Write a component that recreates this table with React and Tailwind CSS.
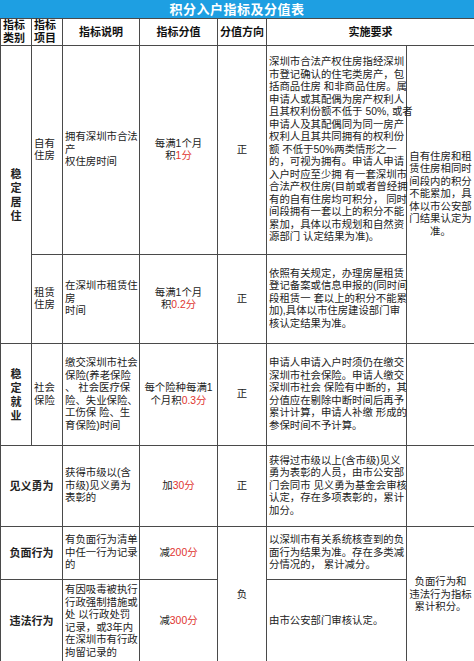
import React from 'react'

// Lines are broken by hand so that they wrap where the original table does
const L = ({ lines }) =>
    lines.map((t, i) => (
        <React.Fragment key={i}>
            {i > 0 && <br />}
            {t}
        </React.Fragment>
    ))

const Red = ({ children }) => <span className="text-[#e0352f]">{children}</span>

const td = 'border border-[#4a4a4a] align-middle px-[2px] whitespace-nowrap'
const th = 'border border-[#4a4a4a] align-middle font-bold text-[11px] leading-[13px] text-[#111]'

export default function App() {
    return (
        <div
            className="w-[474px] bg-white text-[#222] overflow-hidden h-[661px]"
            style={{ fontFamily: '"Liberation Sans", "Noto Sans CJK SC", sans-serif' }}
        >
            {/* title bar */}
            <div className="h-[18px] bg-[#1e9fe2] flex items-center justify-center text-white font-bold text-[13px] leading-[15px] tracking-[0.5px]">
                积分入户指标及分值表
            </div>

            <table className="w-[474px] table-fixed border-collapse text-[10.4px] leading-[12.5px]">
                <colgroup>
                    <col className="w-[31px]" />
                    <col className="w-[31px]" />
                    <col className="w-[77px]" />
                    <col className="w-[78px]" />
                    <col className="w-[49px]" />
                    <col className="w-[140px]" />
                    <col className="w-[68px]" />
                </colgroup>
                <tbody>
                    <tr className="h-[27px]">
                        <th className={`${th} text-left pl-[2px]`}>指标<br />类别</th>
                        <th className={`${th} text-left pl-[2px]`}>指标<br />项目</th>
                        <th className={th}>指标说明</th>
                        <th className={th}>指标分值</th>
                        <th className={th}>分值方向</th>
                        <th colSpan={2} className={th}>实施要求</th>
                    </tr>

                    {/* 稳定居住 */}
                    <tr className="h-[209px]">
                        <td rowSpan={2} className={`${td} text-center font-bold text-[11px] leading-[14px]`}>
                            <L lines={['稳', '定', '居', '住']} />
                        </td>
                        <td className={td}>
                            <L lines={['自有', '住房']} />
                        </td>
                        <td className={td}>
                            <L lines={['拥有深圳市合法', '产', '权住房时间']} />
                        </td>
                        <td className={`${td} text-center`}>
                            每满1个月<br />积<Red>1分</Red>
                        </td>
                        <td className={`${td} text-center`}>正</td>
                        <td className={td}>
                            <L
                                lines={[
                                    '深圳市合法产权住房指经深圳',
                                    '市登记确认的住宅类房产，包',
                                    '括商品住房 和非商品住房。属',
                                    '申请人或其配偶为房产权利人',
                                    '且其权利份额不低于 50%, 或者',
                                    '申请人及其配偶同为同一房产',
                                    '权利人且其共同拥有的权利份',
                                    '额 不低于50%两类情形之一',
                                    '的，可视为拥有。申请人申请',
                                    '入户时应至少拥 有一套深圳市',
                                    '合法产权住房(目前或者曾经拥',
                                    '有的自有住房均可积分， 同时',
                                    '间段拥有一套以上的积分不能',
                                    '累加，具体以市规划和自然资',
                                    '源部门 认定结果为准)。',
                                ]}
                            />
                        </td>
                        <td rowSpan={2} className={`${td} text-center`}>
                            <L
                                lines={[
                                    '自有住房和租',
                                    '赁住房相同时',
                                    '间段内的积分',
                                    '不能累加，具',
                                    '体以市公安部',
                                    '门结果认定为',
                                    '准。',
                                ]}
                            />
                        </td>
                    </tr>
                    <tr className="h-[89px]">
                        <td className={td}>
                            <L lines={['租赁', '住房']} />
                        </td>
                        <td className={td}>
                            <L lines={['在深圳市租赁住', '房', '时间']} />
                        </td>
                        <td className={`${td} text-center`}>
                            每满1个月<br />积<Red>0.2分</Red>
                        </td>
                        <td className={`${td} text-center`}>正</td>
                        <td className={td}>
                            <L
                                lines={[
                                    '依照有关规定，办理房屋租赁',
                                    '登记备案或信息申报的(同时间',
                                    '段租赁一 套以上的积分不能累',
                                    '加),具体以市住房建设部门审',
                                    '核认定结果为准。',
                                ]}
                            />
                        </td>
                    </tr>

                    {/* 稳定就业 */}
                    <tr className="h-[102px]">
                        <td className={`${td} text-center font-bold text-[11px] leading-[14px]`}>
                            <L lines={['稳', '定', '就', '业']} />
                        </td>
                        <td className={td}>
                            <L lines={['社会', '保险']} />
                        </td>
                        <td className={td}>
                            <L
                                lines={[
                                    '缴交深圳市社会',
                                    '保险(养老保险',
                                    '、 社会医疗保',
                                    '险、失业保险、',
                                    '工伤保 险、生',
                                    '育保险)时间',
                                ]}
                            />
                        </td>
                        <td className={`${td} text-center`}>
                            每个险种每满1<br />个月积<Red>0.3分</Red>
                        </td>
                        <td className={`${td} text-center`}>正</td>
                        <td className={td}>
                            <L
                                lines={[
                                    '申请人申请入户时须仍在缴交',
                                    '深圳市社会保险。申请人缴交',
                                    '深圳市社会 保险有中断的，其',
                                    '分值应在剔除中断时间后再予',
                                    '累计计算，申请人补缴 形成的',
                                    '参保时间不予计算。',
                                ]}
                            />
                        </td>
                        <td className={td}></td>
                    </tr>

                    {/* 见义勇为 */}
                    <tr className="h-[81px]">
                        <td colSpan={2} className={`${td} text-center font-bold text-[11px]`}>见义勇为</td>
                        <td className={td}>
                            <L lines={['获得市级以(含', '市级)见义勇为', '表彰的']} />
                        </td>
                        <td className={`${td} text-center`}>
                            加<Red>30分</Red>
                        </td>
                        <td className={`${td} text-center`}>正</td>
                        <td className={td}>
                            <L
                                lines={[
                                    '获得过市级以上(含市级)见义',
                                    '勇为表彰的人员，由市公安部',
                                    '门会同市 见义勇为基金会审核',
                                    '认定，存在多项表彰的，累计',
                                    '加分。',
                                ]}
                            />
                        </td>
                        <td className={td}></td>
                    </tr>

                    {/* 负面行为 */}
                    <tr className="h-[53px]">
                        <td colSpan={2} className={`${td} text-center font-bold text-[11px]`}>负面行为</td>
                        <td className={td}>
                            <L lines={['有负面行为清单', '中任一行为记录', '的']} />
                        </td>
                        <td className={`${td} text-center`}>
                            减<Red>200分</Red>
                        </td>
                        <td rowSpan={2} className={`${td} text-center`}>负</td>
                        <td className={td}>
                            <L
                                lines={[
                                    '以深圳市有关系统核查到的负',
                                    '面行为结果为准。存在多类减',
                                    '分情况的， 累计减分。',
                                ]}
                            />
                        </td>
                        <td rowSpan={2} className={`${td} text-center`}>
                            <L lines={['负面行为和', '违法行为指标', '累计积分。']} />
                        </td>
                    </tr>

                    {/* 违法行为 */}
                    <tr className="h-[84px]">
                        <td colSpan={2} className={`${td} text-center font-bold text-[11px]`}>违法行为</td>
                        <td className={td}>
                            <L
                                lines={[
                                    '有因吸毒被执行',
                                    '行政强制措施或',
                                    '处 以行政处罚',
                                    '记录，或3年内',
                                    '在深圳市有行政',
                                    '拘留记录的',
                                ]}
                            />
                        </td>
                        <td className={`${td} text-center`}>
                            减<Red>300分</Red>
                        </td>
                        <td className={td}>由市公安部门审核认定。</td>
                    </tr>
                </tbody>
            </table>
        </div>
    )
}
